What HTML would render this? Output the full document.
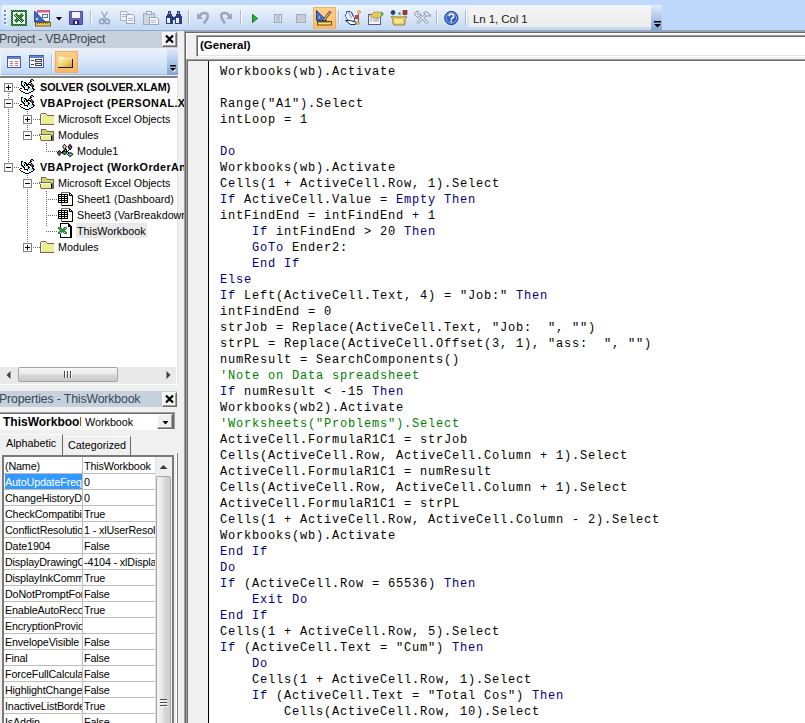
<!DOCTYPE html>
<html><head><meta charset="utf-8"><style>
*{margin:0;padding:0;box-sizing:border-box}
html,body{width:805px;height:723px;overflow:hidden;background:#F0F0F0;font-family:"Liberation Sans",sans-serif;position:relative}
.a{position:absolute}
svg{position:absolute;overflow:visible}
#tb{left:0;top:0;width:805px;height:31px;background:#BED9FB;border-bottom:1px solid #8CA6C8}
#tbstrip{left:1px;top:5px;width:661px;height:26px;border-radius:3px 3px 0 0;background:linear-gradient(#EEF4FC,#D9E6F8 50%,#C2D8F5);border-bottom:1px solid #8FA9CC}
.ttl{background:#C7D1DD;color:#3C4656;font-size:12.3px;line-height:16px;text-indent:-1px;letter-spacing:-0.3px;white-space:nowrap;overflow:hidden}
.xbtn{width:15px;height:15px;background:#F4F4F4;border:1px solid #fff;border-right-color:#696969;border-bottom-color:#696969;box-shadow:inset -1px -1px 0 #A0A0A0}
#ptb{left:0;top:48px;width:178px;height:28px;background:linear-gradient(#E3ECF8,#CCDDF3);border-bottom:1px solid #A9C2E3}
#tree{left:0;top:76px;width:178px;height:309px;background:#fff;border-top:2px solid #808080;border-right:1px solid #E0E0E0;border-bottom:1px solid #fff;overflow:hidden}
.exp{width:9px;height:9px;border:1px solid #808080;background:#fff}
.exp .hb{position:absolute;left:1px;top:3px;width:5px;height:1px;background:#000}
.exp .vb{position:absolute;left:3px;top:1px;width:1px;height:5px;background:#000}
.vd{width:1px;background:repeating-linear-gradient(#6A6A6A 0 1px,transparent 1px 2px)}
.hd{height:1px;background:repeating-linear-gradient(90deg,#6A6A6A 0 1px,transparent 1px 2px)}
.tt{font-size:10.75px;line-height:16px;height:16px;white-space:nowrap;color:#000}
.g{letter-spacing:-0.15px}
.b{font-weight:bold}
#code{left:184px;top:31px;width:621px;height:692px;background:#F0F0F0;border-left:1px solid #A0A0A0;border-top:1px solid #A0A0A0}
#code2{left:185px;top:32px;width:620px;height:691px;border-left:1px solid #696969;border-top:1px solid #696969}
#code3{left:186px;top:33px;width:619px;height:690px;border-left:1px solid #fff;border-top:1px solid #fff}
#gen{left:196px;top:35px;width:620px;height:22px;background:#fff;border-left:1px solid #A0A0A0;border-top:1px solid #A0A0A0;border-bottom:1px solid #fff;box-shadow:inset 0 -1px 0 #E3E3E3}
#gen2{left:197px;top:36px;width:620px;height:20px;border-left:1px solid #696969;border-top:1px solid #696969;font-size:11.5px;font-weight:bold;line-height:17px;padding-left:2px}
#codearea{left:186px;top:59px;width:620px;height:664px;background:#fff;border-top:1px solid #A0A0A0;border-left:1px solid #A0A0A0}
#codearea2{left:187px;top:60px;width:620px;height:664px;border-top:1px solid #696969;border-left:1px solid #696969}
#margin{left:188px;top:61px;width:21px;height:662px;background:#F0F0F0;border-right:1px solid #000}
pre{font-family:"Liberation Mono",monospace;font-size:12px;letter-spacing:0.8px;line-height:16px;color:#000}
.k{color:#000080}.c{color:#008000}
</style></head><body>
<div id="tb" class="a"></div><div id="tbstrip" class="a"></div>
<svg class="a" style="left:4px;top:10px" width="4" height="16" viewBox="0 0 4 16" shape-rendering="crispEdges"><path d="M1 1h2v2H1zM1 5h2v2H1zM1 9h2v2H1zM1 13h2v2H1z" fill="#FFF"/><path d="M0 0h2v2H0zM0 4h2v2H0zM0 8h2v2H0zM0 12h2v2H0z" fill="#7B8FB8"/></svg>
<svg class="a" style="left:11px;top:10px" width="16" height="16" viewBox="0 0 16 16" shape-rendering="crispEdges"><defs><pattern id="dg" width="2" height="2" patternUnits="userSpaceOnUse"><rect width="2" height="2" fill="#4E9E56"/><rect width="1" height="1" fill="#13561F"/><rect x="1" y="1" width="1" height="1" fill="#13561F"/></pattern></defs><rect x="0" y="0" width="16" height="16" fill="url(#dg)"/><rect x="2" y="2" width="12" height="12" fill="#F2FBF2"/><path d="M4.2 4.2L11.8 11.8M11.8 4.2L4.2 11.8" stroke="url(#dg)" stroke-width="3.6"/><path d="M4.5 4.5L12 12" stroke="#C8F0C8" stroke-width="0.9"/></svg>
<svg class="a" style="left:34px;top:10px" width="17" height="17" viewBox="0 0 17 17"><rect x="3.5" y="0.5" width="12" height="11" fill="#F4F6FA" stroke="#5A6E9A"/><rect x="3" y="0" width="13" height="2.5" fill="#D8607A"/><rect x="8.5" y="4.5" width="5" height="3" fill="#fff" stroke="#5A6E9A"/><path d="M0.5 1v11h11z" fill="#3A66D0" stroke="#22408C" stroke-width="0.8"/><circle cx="3" cy="9" r="1" fill="#fff"/><rect x="1.5" y="12.5" width="15" height="3.5" fill="#EEC860" stroke="#7A5A18" stroke-width="1"/><path d="M3.5 13v1M5.5 13v1M7.5 13v1M9.5 13v1M11.5 13v1M13.5 13v1" stroke="#7A5A18" stroke-width="0.8"/></svg>
<svg class="a" style="left:56px;top:17px" width="6" height="4" viewBox="0 0 6 4"><path d="M0 0h6L3 3.5z" fill="#000"/></svg>
<svg class="a" style="left:69px;top:11px" width="14" height="14" viewBox="0 0 14 14"><rect x="0" y="0" width="14" height="14" rx="1" fill="#4B4BA8"/><rect x="1" y="1" width="12" height="12" fill="#6464C0"/><rect x="3" y="1" width="8" height="6" fill="#F4F4FF"/><rect x="4" y="9" width="6" height="5" fill="#2A2A70"/><rect x="6" y="10" width="2" height="3" fill="#fff"/></svg>
<div class="a" style="left:90px;top:10px;width:2px;height:15px;border-left:1px solid #A7BBD8;border-right:1px solid #fff"></div>
<svg class="a" style="left:99px;top:11px" width="11" height="14" viewBox="0 0 11 14"><path d="M2.5 0.5L7 8.5M8.5 0.5L4 8.5" stroke="#A0ACC0" stroke-width="1.5"/><circle cx="2.8" cy="10.5" r="2.2" fill="none" stroke="#8E9CB6" stroke-width="1.4"/><circle cx="8.2" cy="10.5" r="2.2" fill="none" stroke="#8E9CB6" stroke-width="1.4"/></svg>
<svg class="a" style="left:120px;top:11px" width="15" height="13" viewBox="0 0 15 13" shape-rendering="crispEdges"><path d="M0.5 0.5h6l2 2v7h-8z" fill="#EEF1F6" stroke="#A9B3C4"/><path d="M6.5 3.5h6l2 2v7h-8z" fill="#F4F6FA" stroke="#99A4B8"/><path d="M2 3h4M2 5h4M8 7h5M8 9h5" stroke="#B0B8C8"/></svg>
<svg class="a" style="left:143px;top:11px" width="16" height="14" viewBox="0 0 16 14" shape-rendering="crispEdges"><path d="M0.5 2.5h11v11h-11z" fill="#D0D6E0" stroke="#A0AABB"/><rect x="3.5" y="0.5" width="5" height="3" fill="#E8ECF2" stroke="#A0AABB"/><path d="M6.5 6.5h7l2 2v5h-9z" fill="#F4F6FA" stroke="#99A4B8"/><path d="M8 9h5M8 11h5" stroke="#B0B8C8"/></svg>
<svg class="a" style="left:166px;top:11px" width="16" height="13" viewBox="0 0 16 13" shape-rendering="crispEdges"><path d="M2 0h3v3h1v2h1v8H0V5h1V3h1z" fill="#2C3E80"/><path d="M11 0h3v3h1v2h1v8H9V5h1V3h1z" fill="#2C3E80"/><rect x="1" y="7" width="3" height="5" fill="#F0F2F8"/><rect x="10" y="7" width="3" height="5" fill="#F0F2F8"/><rect x="7" y="6" width="2" height="3" fill="#2C3E80"/><rect x="3" y="1" width="1" height="2" fill="#9AAAD8"/><rect x="12" y="1" width="1" height="2" fill="#9AAAD8"/></svg>
<div class="a" style="left:188px;top:10px;width:2px;height:15px;border-left:1px solid #A7BBD8;border-right:1px solid #fff"></div>
<svg class="a" style="left:197px;top:11px" width="13" height="13" viewBox="0 0 13 13"><path d="M2.5 5.5C4 1.5 10.5 0.5 10.8 4.5 11 8 8.5 10 7 12.5" fill="none" stroke="#9CA6B8" stroke-width="2.6"/><path d="M0 2v6h6z" fill="#9CA6B8"/></svg>
<svg class="a" style="left:219px;top:11px" width="13" height="13" viewBox="0 0 13 13"><path d="M10.5 5.5C9 1.5 2.5 0.5 2.2 4.5 2 8 4.5 10 6 12.5" fill="none" stroke="#9CA6B8" stroke-width="2.6"/><path d="M13 2v6H7z" fill="#9CA6B8"/></svg>
<div class="a" style="left:240px;top:10px;width:2px;height:15px;border-left:1px solid #A7BBD8;border-right:1px solid #fff"></div>
<svg class="a" style="left:252px;top:14px" width="6" height="9" viewBox="0 0 6 9"><path d="M0.5 0.5v8l5-4z" fill="#2AB02A" stroke="#137A13" stroke-width="1"/></svg>
<svg class="a" style="left:274px;top:14px" width="8" height="9" viewBox="0 0 8 9"><rect x="0.5" y="0.5" width="2.5" height="8" fill="#E4E8EE" stroke="#9AA3B3"/><rect x="5" y="0.5" width="2.5" height="8" fill="#E4E8EE" stroke="#9AA3B3"/></svg>
<svg class="a" style="left:296px;top:14px" width="10" height="9" viewBox="0 0 10 9"><rect x="0.5" y="0.5" width="9" height="8" fill="#C8CED8" stroke="#A3ACBC"/></svg>
<div class="a" style="left:313px;top:7px;width:23px;height:22px;background:linear-gradient(#FCD08E,#F9BC6C);border:1px solid #F0B060"></div>
<svg class="a" style="left:316px;top:10px" width="17" height="16" viewBox="0 0 17 16"><path d="M0.5 0.5v10h10z" fill="#4A72D8" stroke="#22408C" stroke-width="1"/><path d="M2.5 5v3.5h3.5z" fill="#2850B0"/><circle cx="3.4" cy="7.2" r="0.8" fill="#fff"/><path d="M8 10L14.5 1.5" stroke="#3A2A10" stroke-width="2.6"/><path d="M8 10L14.5 1.5" stroke="#F0DC90" stroke-width="1.2"/><path d="M13.5 0.5l2 1.5-1 1.4-2-1.5z" fill="#C07050"/><rect x="1.5" y="11.5" width="14" height="3.5" fill="#F6DA80" stroke="#6A4A10" stroke-width="1"/><path d="M3 12v1M5 12v1M7 12v1M9 12v1M11 12v1M13 12v1" stroke="#6A4A10" stroke-width="0.8"/></svg>
<div class="a" style="left:338px;top:10px;width:2px;height:15px;border-left:1px solid #A7BBD8;border-right:1px solid #fff"></div>
<svg class="a" style="left:345px;top:10px" width="17" height="16" viewBox="0 0 17 16"><path d="M1.5 1.5h4l2 2h-1l2 2h-1l2 2v3l-2 1h-3l-3-3v-1l-1-1v-2l1-1z" fill="#EAF2FF" stroke="#2C50A8" stroke-width="1"/><path d="M3 3h2M4 5h2M5 7h2" stroke="#6C90D8" stroke-width="1"/><path d="M0.5 10.5l5 4h5l1-2-6-2z" fill="#fff" stroke="#1E2A50" stroke-width="1"/><path d="M13.5 4v9" stroke="#3A60C0"/><path d="M14 0l2 2-2 2-2-2z" fill="#E8C848" stroke="#A08020" stroke-width="0.5"/><path d="M10 5h4v4h-4z" fill="#D04030"/><path d="M13 11l2 2-2 2-2-2z" fill="#E8C848" stroke="#A08020" stroke-width="0.5"/></svg>
<svg class="a" style="left:368px;top:11px" width="17" height="15" viewBox="0 0 17 15"><rect x="0.5" y="3.5" width="12" height="10" fill="#F8FAFE" stroke="#4A5E88"/><path d="M2 8h2M5 8h6M2 10h2M5 10h6" stroke="#8A98B8"/><path d="M2 5l4-4h5l3 1v3l-3 2h-3l-2-1-2 1z" fill="#E6C860" stroke="#9A8030" stroke-width="0.6"/><path d="M13 0l3 3-3 3z" fill="#50A850"/></svg>
<svg class="a" style="left:390px;top:10px" width="18" height="16" viewBox="0 0 18 16"><circle cx="3" cy="2.5" r="2" fill="#2A3890" stroke="#101850" stroke-width="0.6"/><path d="M10.5 1.5v4l-3-2z" fill="#40A050"/><rect x="13" y="0.5" width="4" height="4" fill="#B83030" stroke="#601818" stroke-width="0.6"/><path d="M1 7l2-1 2 1h8l2-1 2 1-2 2v5l-1 1H4l-1-1V9z" fill="#E8D060" stroke="#7A6420" stroke-width="0.8"/><path d="M4 9h9v4H4z" fill="#F4E48A"/></svg>
<svg class="a" style="left:414px;top:11px" width="17" height="14" viewBox="0 0 17 14"><path d="M3 12.5l9-9M5 3.5l9 9" stroke="#8E96A6" stroke-width="2.6"/><path d="M3 12.5l9-9M5 3.5l9 9" stroke="#E4E8EE" stroke-width="1.2"/><path d="M0.5 3.5a3 3 0 0 1 4-3l-1 2 1 1 2-1a3 3 0 0 1-3 4z" fill="#DDE2EA" stroke="#8E96A6" stroke-width="1"/><path d="M9.5 1.5l3-1 4 3v2l-2-1-2 1z" fill="#DDE2EA" stroke="#8E96A6" stroke-width="1"/></svg>
<div class="a" style="left:436px;top:10px;width:2px;height:15px;border-left:1px solid #A7BBD8;border-right:1px solid #fff"></div>
<svg class="a" style="left:444px;top:11px" width="15" height="14" viewBox="0 0 15 14"><circle cx="7.3" cy="7" r="6.6" fill="#2F5FC8" stroke="#1A3A90" stroke-width="1"/><circle cx="7.3" cy="7" r="5.3" fill="none" stroke="#fff" stroke-width="0.8" opacity="0.6"/><path d="M5 5.2a2.3 2.2 0 1 1 3 2.1c-0.7 0.3-0.8 0.6-0.8 1.4" fill="none" stroke="#fff" stroke-width="1.6"/><rect x="6.4" y="9.6" width="1.7" height="1.7" fill="#fff"/></svg>
<div class="a" style="left:465px;top:10px;width:2px;height:15px;border-left:1px solid #A7BBD8;border-right:1px solid #fff"></div>
<div class="a" style="left:469px;top:6px;width:182px;height:21px;background:linear-gradient(#F4F4F4,#EDEDED);border-top:1px solid #F8FAFD"></div>
<div class="a" style="left:473px;top:11px;font-size:11.5px;line-height:16px;color:#1A1A1A;white-space:nowrap;letter-spacing:-0.1px">Ln 1, Col 1</div>
<div class="a" style="left:651px;top:5px;width:11px;height:26px;border-radius:0 3px 0 0;background:linear-gradient(#E2ECF9,#A9C4EA 55%,#7FA3D6)"></div>
<svg class="a" style="left:654px;top:21px" width="7" height="7" viewBox="0 0 7 7"><rect x="0" y="0" width="7" height="1.5" fill="#000"/><path d="M0 3h7L3.5 6.5z" fill="#000"/></svg>
<div class="a ttl" style="left:0;top:31px;width:178px;height:17px">Project - VBAProject</div>
<div class="a xbtn" style="left:162px;top:32px"></div><svg class="a" style="left:165px;top:35px" width="9" height="8" viewBox="0 0 9 8"><path d="M1 0.5l7 7M8 0.5l-7 7" stroke="#000" stroke-width="2.2"/></svg>
<div class="a" style="left:0;top:48px;width:178px;height:28px;background:#F0F0F0"></div>
<div class="a" style="left:1px;top:49px;width:177px;height:26px;border-radius:3px 3px 0 0;background:linear-gradient(#EAF1FC,#D8E6F9 50%,#BFD6F5);border-bottom:1px solid #A3BDE2"></div>
<svg class="a" style="left:7px;top:56px" width="15" height="12" viewBox="0 0 15 12" shape-rendering="crispEdges"><rect x="0.5" y="0.5" width="13" height="11" fill="#F6F8FC" stroke="#3F5EA8"/><rect x="0.5" y="0.5" width="13" height="2" fill="#5F86D0"/><path d="M3 5h3M8 5h3M3 7h3M8 7h3M3 9h3M8 9h3" stroke="#D07070"/></svg>
<svg class="a" style="left:29px;top:55px" width="15" height="13" viewBox="0 0 15 13" shape-rendering="crispEdges"><rect x="0.5" y="0.5" width="14" height="12" fill="#F6F8FC" stroke="#3F5EA8"/><rect x="0.5" y="0.5" width="14" height="2" fill="#5F86D0"/><path d="M2 5h3M2 9h3" stroke="#404040"/><rect x="6.5" y="4.5" width="6" height="2" fill="#fff" stroke="#404040"/><rect x="6.5" y="8.5" width="6" height="2" fill="#fff" stroke="#404040"/></svg>
<div class="a" style="left:51px;top:55px;width:2px;height:15px;border-left:1px solid #A7BBD8;border-right:1px solid #fff"></div>
<div class="a" style="left:55px;top:51px;width:23px;height:22px;background:linear-gradient(#FCCE8A,#F9B866);border:1px solid #EDB060"></div>
<svg class="a" style="left:58px;top:56px" width="16" height="12" viewBox="0 0 16 12"><defs><linearGradient id="fg" x1="0" y1="0" x2="1" y2="1"><stop offset="0" stop-color="#FFF2B8"/><stop offset="0.6" stop-color="#EBC860"/><stop offset="1" stop-color="#C89828"/></linearGradient></defs><path d="M0.5 0.5h5l1 1.5h7.5v9H0.5z" fill="#FFF4C8" stroke="#E8D8A0" stroke-width="0.6"/><rect x="0.5" y="3" width="14" height="8.5" fill="url(#fg)"/><path d="M0.5 3v8.5h14V3" fill="none" stroke="#3A2A08" stroke-width="1" stroke-dasharray="0 8.5 22.5"/><path d="M0 11.5h15M14.5 3v9" stroke="#2A1A04" stroke-width="1"/></svg>
<div class="a" style="left:167px;top:49px;width:11px;height:26px;border-radius:0 3px 0 0;background:linear-gradient(#DDE8F8,#A9C4EA 55%,#7FA3D6)"></div>
<svg class="a" style="left:170px;top:65px" width="7" height="8" viewBox="0 0 7 8"><rect x="0" y="0" width="6" height="1.5" fill="#000"/><path d="M0.5 3.5h5L3 6.5z" fill="#fff" transform="translate(0.8,0.8)"/><path d="M0 3h6L3 6z" fill="#000"/></svg>
<div id="tree" class="a"></div>
<div class="a vd" style="left:8px;top:93px;height:70px"></div>
<div class="a vd" style="left:27px;top:111px;height:20px"></div>
<div class="a vd" style="left:46px;top:143px;height:8px"></div>
<div class="a vd" style="left:27px;top:175px;height:68px"></div>
<div class="a vd" style="left:46px;top:191px;height:36px"></div>
<div class="a hd" style="left:14px;top:87px;width:5px"></div>
<div class="a exp" style="left:4px;top:83px"><div class="hb"></div><div class="vb"></div></div>
<svg class="a" style="left:19px;top:79px" width="16" height="15" viewBox="0 0 16 15" shape-rendering="crispEdges"><path d="M12 0h2v1h-2zM11 1h1v1h-1zM14 1h1v1h-1zM2 2h2v1h-2zM11 2h2v1h-2zM2 3h1v1h-1zM5 3h2v1h-2zM10 3h2v1h-2zM2 4h1v1h-1zM6 4h2v1h-2zM9 4h1v1h-1zM12 4h1v1h-1zM2 5h1v1h-1zM5 5h1v1h-1zM7 5h5v1h-5zM13 5h1v1h-1zM2 6h2v1h-2zM5 6h1v1h-1zM7 6h2v1h-2zM11 6h1v1h-1zM14 6h1v1h-1zM3 7h2v1h-2zM9 7h1v1h-1zM13 7h2v1h-2zM4 8h2v1h-2zM9 8h2v1h-2zM13 8h1v1h-1zM1 9h2v1h-2zM5 9h1v1h-1zM9 9h1v1h-1zM13 9h2v1h-2zM0 10h1v1h-1zM5 10h4v1h-4zM14 10h2v1h-2zM1 11h1v1h-1zM8 11h1v1h-1zM14 11h1v1h-1zM2 12h2v1h-2zM12 12h2v1h-2zM4 13h2v1h-2zM10 13h2v1h-2zM6 14h4v1h-4z" fill="#000"/><path d="M12 1h2v1h-2z" fill="#78C878"/><path d="M3 3h2v1h-2zM4 4h2v1h-2zM6 5h1v1h-1zM6 6h1v1h-1zM6 7h3v1h-3zM8 8h1v1h-1zM8 9h1v1h-1zM10 9h3v1h-3zM10 10h4v1h-4zM11 11h3v1h-3z" fill="#A8EEF6"/><path d="M3 4h1v1h-1zM3 5h2v1h-2zM4 6h1v1h-1zM9 6h2v1h-2zM5 7h1v1h-1zM6 8h2v1h-2zM6 9h2v1h-2zM1 10h4v1h-4zM9 10h1v1h-1zM2 11h6v1h-6zM9 11h2v1h-2zM4 12h8v1h-8zM6 13h4v1h-4z" fill="#fff"/><path d="M10 4h2v1h-2z" fill="#F0EC98"/><path d="M12 5h1v1h-1zM12 6h2v1h-2zM12 7h1v1h-1z" fill="#8A4A9A"/></svg>
<div class="a tt b" style="left:40px;top:79px;">SOLVER (SOLVER.XLAM)</div>
<div class="a hd" style="left:14px;top:103px;width:5px"></div>
<div class="a exp" style="left:4px;top:99px"><div class="hb"></div></div>
<svg class="a" style="left:19px;top:95px" width="16" height="15" viewBox="0 0 16 15" shape-rendering="crispEdges"><path d="M12 0h2v1h-2zM11 1h1v1h-1zM14 1h1v1h-1zM2 2h2v1h-2zM11 2h2v1h-2zM2 3h1v1h-1zM5 3h2v1h-2zM10 3h2v1h-2zM2 4h1v1h-1zM6 4h2v1h-2zM9 4h1v1h-1zM12 4h1v1h-1zM2 5h1v1h-1zM5 5h1v1h-1zM7 5h5v1h-5zM13 5h1v1h-1zM2 6h2v1h-2zM5 6h1v1h-1zM7 6h2v1h-2zM11 6h1v1h-1zM14 6h1v1h-1zM3 7h2v1h-2zM9 7h1v1h-1zM13 7h2v1h-2zM4 8h2v1h-2zM9 8h2v1h-2zM13 8h1v1h-1zM1 9h2v1h-2zM5 9h1v1h-1zM9 9h1v1h-1zM13 9h2v1h-2zM0 10h1v1h-1zM5 10h4v1h-4zM14 10h2v1h-2zM1 11h1v1h-1zM8 11h1v1h-1zM14 11h1v1h-1zM2 12h2v1h-2zM12 12h2v1h-2zM4 13h2v1h-2zM10 13h2v1h-2zM6 14h4v1h-4z" fill="#000"/><path d="M12 1h2v1h-2z" fill="#78C878"/><path d="M3 3h2v1h-2zM4 4h2v1h-2zM6 5h1v1h-1zM6 6h1v1h-1zM6 7h3v1h-3zM8 8h1v1h-1zM8 9h1v1h-1zM10 9h3v1h-3zM10 10h4v1h-4zM11 11h3v1h-3z" fill="#A8EEF6"/><path d="M3 4h1v1h-1zM3 5h2v1h-2zM4 6h1v1h-1zM9 6h2v1h-2zM5 7h1v1h-1zM6 8h2v1h-2zM6 9h2v1h-2zM1 10h4v1h-4zM9 10h1v1h-1zM2 11h6v1h-6zM9 11h2v1h-2zM4 12h8v1h-8zM6 13h4v1h-4z" fill="#fff"/><path d="M10 4h2v1h-2z" fill="#F0EC98"/><path d="M12 5h1v1h-1zM12 6h2v1h-2zM12 7h1v1h-1z" fill="#8A4A9A"/></svg>
<div class="a tt b" style="left:40px;top:95px;letter-spacing:0.45px;">VBAProject (PERSONAL.XLSB)</div>
<div class="a hd" style="left:33px;top:119px;width:7px"></div>
<div class="a exp" style="left:23px;top:115px"><div class="hb"></div><div class="vb"></div></div>
<svg class="a" style="left:40px;top:111px" width="16" height="16" viewBox="0 0 16 16" shape-rendering="crispEdges">
<path d="M1 2h5v1h1v1h7v10H0V3h1z" fill="#6E6C50"/>
<path d="M1 3h5v1h1v1h7v8H1z" fill="#EEEC90"/>
<path d="M1 3h5v1H1zM1 5h1v8H1z" fill="#FCFCD0"/>
</svg>
<div class="a tt" style="left:58px;top:111px;">Microsoft Excel Objects</div>
<div class="a hd" style="left:33px;top:135px;width:6px"></div>
<div class="a exp" style="left:23px;top:131px"><div class="hb"></div></div>
<svg class="a" style="left:39px;top:127px" width="16" height="16" viewBox="0 0 16 16" shape-rendering="crispEdges">
<path d="M2 2h5v1h1v1h7v10H2z" fill="#6E6C50"/>
<path d="M3 3h4v1h1v1h6v3H3z" fill="#D8D468"/>
<path d="M0 7h12v1h1v1h1v4h1v1H2v-1H1V9H0z" fill="#6E6C50"/>
<path d="M1 8h11v1h1v4H2V9H1z" fill="#EEEC90"/>
<path d="M1 8h10v1H1z" fill="#fff"/>
<path d="M12 9h1v4h-1z" fill="#000"/>
</svg>
<div class="a tt" style="left:58px;top:127px;">Modules</div>
<div class="a hd" style="left:46px;top:151px;width:11px"></div>
<svg class="a" style="left:57px;top:144px" width="17" height="16" viewBox="0 0 17 16">
<path d="M4 8.5L8.5 5.5M8 4.5L13 10M12.5 5.5L8.5 9" stroke="#000" stroke-width="1" shape-rendering="crispEdges"/>
<path d="M7.5 0.3L9.3 2.8 7.5 5.5 5.7 2.8z" fill="#F4ECB0" stroke="#000" stroke-width="1"/>
<path d="M13 0.3L15 3 13 6 11 3z" fill="#9A3CB0" stroke="#000" stroke-width="1"/>
<path d="M2.3 6.3L4.3 8.8 2.3 11.5 0.3 8.8z" fill="#9A3CB0" stroke="#000" stroke-width="1"/>
<path d="M5 8.8L7 7.3h1.5L10 8.8 8.5 10.3H7z" fill="#3AA050" stroke="#000" stroke-width="1"/>
<path d="M10.5 10.3L12.5 8.8h1.5L16 10.3 14 12.3h-1.5z" fill="#5CC0D8" stroke="#000" stroke-width="1"/>
</svg>
<div class="a tt" style="left:77px;top:143px;">Module1</div>
<div class="a hd" style="left:14px;top:167px;width:5px"></div>
<div class="a exp" style="left:4px;top:163px"><div class="hb"></div></div>
<svg class="a" style="left:19px;top:159px" width="16" height="15" viewBox="0 0 16 15" shape-rendering="crispEdges"><path d="M12 0h2v1h-2zM11 1h1v1h-1zM14 1h1v1h-1zM2 2h2v1h-2zM11 2h2v1h-2zM2 3h1v1h-1zM5 3h2v1h-2zM10 3h2v1h-2zM2 4h1v1h-1zM6 4h2v1h-2zM9 4h1v1h-1zM12 4h1v1h-1zM2 5h1v1h-1zM5 5h1v1h-1zM7 5h5v1h-5zM13 5h1v1h-1zM2 6h2v1h-2zM5 6h1v1h-1zM7 6h2v1h-2zM11 6h1v1h-1zM14 6h1v1h-1zM3 7h2v1h-2zM9 7h1v1h-1zM13 7h2v1h-2zM4 8h2v1h-2zM9 8h2v1h-2zM13 8h1v1h-1zM1 9h2v1h-2zM5 9h1v1h-1zM9 9h1v1h-1zM13 9h2v1h-2zM0 10h1v1h-1zM5 10h4v1h-4zM14 10h2v1h-2zM1 11h1v1h-1zM8 11h1v1h-1zM14 11h1v1h-1zM2 12h2v1h-2zM12 12h2v1h-2zM4 13h2v1h-2zM10 13h2v1h-2zM6 14h4v1h-4z" fill="#000"/><path d="M12 1h2v1h-2z" fill="#78C878"/><path d="M3 3h2v1h-2zM4 4h2v1h-2zM6 5h1v1h-1zM6 6h1v1h-1zM6 7h3v1h-3zM8 8h1v1h-1zM8 9h1v1h-1zM10 9h3v1h-3zM10 10h4v1h-4zM11 11h3v1h-3z" fill="#A8EEF6"/><path d="M3 4h1v1h-1zM3 5h2v1h-2zM4 6h1v1h-1zM9 6h2v1h-2zM5 7h1v1h-1zM6 8h2v1h-2zM6 9h2v1h-2zM1 10h4v1h-4zM9 10h1v1h-1zM2 11h6v1h-6zM9 11h2v1h-2zM4 12h8v1h-8zM6 13h4v1h-4z" fill="#fff"/><path d="M10 4h2v1h-2z" fill="#F0EC98"/><path d="M12 5h1v1h-1zM12 6h2v1h-2zM12 7h1v1h-1z" fill="#8A4A9A"/></svg>
<div class="a tt b" style="left:40px;top:159px;letter-spacing:0.45px;">VBAProject (WorkOrderAnalysis.xlsm)</div>
<div class="a hd" style="left:33px;top:183px;width:6px"></div>
<div class="a exp" style="left:23px;top:179px"><div class="hb"></div></div>
<svg class="a" style="left:39px;top:175px" width="16" height="16" viewBox="0 0 16 16" shape-rendering="crispEdges">
<path d="M2 2h5v1h1v1h7v10H2z" fill="#6E6C50"/>
<path d="M3 3h4v1h1v1h6v3H3z" fill="#D8D468"/>
<path d="M0 7h12v1h1v1h1v4h1v1H2v-1H1V9H0z" fill="#6E6C50"/>
<path d="M1 8h11v1h1v4H2V9H1z" fill="#EEEC90"/>
<path d="M1 8h10v1H1z" fill="#fff"/>
<path d="M12 9h1v4h-1z" fill="#000"/>
</svg>
<div class="a tt" style="left:58px;top:175px;">Microsoft Excel Objects</div>
<div class="a hd" style="left:46px;top:199px;width:12px"></div>
<svg class="a" style="left:58px;top:191px" width="16" height="16" viewBox="0 0 16 16" shape-rendering="crispEdges">
<path d="M3 1h9v1h1v1h1v1h1v11H3z" fill="#000"/>
<path d="M3 1h9v1H4v13H3z" fill="#707070"/>
<path d="M4 2h8v1h1v1h1v10H4z" fill="#fff"/>
<path d="M11 2h1v2h2v1h-3z" fill="#000"/>
<path d="M0 3h10v9H0z" fill="#000"/>
<path d="M1 4h2v1H1zM4 4h2v1H4zM7 4h2v1H7zM1 6h2v1H1zM4 6h2v1H4zM7 6h2v1H7zM1 8h2v1H1zM4 8h2v1H4zM7 8h2v1H7zM1 10h2v1H1zM4 10h2v1H4zM7 10h2v1H7z" fill="#fff"/>
</svg>
<div class="a tt" style="left:77px;top:191px;">Sheet1 (Dashboard)</div>
<div class="a hd" style="left:46px;top:215px;width:12px"></div>
<svg class="a" style="left:58px;top:207px" width="16" height="16" viewBox="0 0 16 16" shape-rendering="crispEdges">
<path d="M3 1h9v1h1v1h1v1h1v11H3z" fill="#000"/>
<path d="M3 1h9v1H4v13H3z" fill="#707070"/>
<path d="M4 2h8v1h1v1h1v10H4z" fill="#fff"/>
<path d="M11 2h1v2h2v1h-3z" fill="#000"/>
<path d="M0 3h10v9H0z" fill="#000"/>
<path d="M1 4h2v1H1zM4 4h2v1H4zM7 4h2v1H7zM1 6h2v1H1zM4 6h2v1H4zM7 6h2v1H7zM1 8h2v1H1zM4 8h2v1H4zM7 8h2v1H7zM1 10h2v1H1zM4 10h2v1H4zM7 10h2v1H7z" fill="#fff"/>
</svg>
<div class="a tt" style="left:77px;top:207px;">Sheet3 (VarBreakdown)</div>
<div class="a hd" style="left:46px;top:231px;width:11px"></div>
<svg class="a" style="left:57px;top:223px" width="16" height="16" viewBox="0 0 16 16" shape-rendering="crispEdges">
<path d="M3 0h9v1h1v1h1v1h1v12H3z" fill="#000"/>
<path d="M4 1h7v1h1v1h1v11H4z" fill="#fff"/>
<path d="M11 1h1v2h2v1h-3z" fill="#000"/>
<path d="M1 4h3v1h1v1h1V5h1V4h3v2H9v1H8v1h1v1h1v2H7v-1H6V9H5v1H4v1H1V9h1V8h1V7H2V6H1z" fill="#2E8B3A"/>
<path d="M2 5h1v1h1v1h1v1h1v1h1v1h1v-1H7V9H6V8H5V7H4V6H3V5z" fill="#B8E8B8"/>
<path d="M8 5h1v1H8zM3 9h1v1H3z" fill="#B8E8B8"/>
</svg>
<div class="a" style="left:76px;top:223px;width:71px;height:15px;background:#EAEAEA"></div>
<div class="a tt" style="left:77px;top:223px;">ThisWorkbook</div>
<div class="a hd" style="left:33px;top:247px;width:7px"></div>
<div class="a exp" style="left:23px;top:243px"><div class="hb"></div><div class="vb"></div></div>
<svg class="a" style="left:40px;top:239px" width="16" height="16" viewBox="0 0 16 16" shape-rendering="crispEdges">
<path d="M1 2h5v1h1v1h7v10H0V3h1z" fill="#6E6C50"/>
<path d="M1 3h5v1h1v1h7v8H1z" fill="#EEEC90"/>
<path d="M1 3h5v1H1zM1 5h1v8H1z" fill="#FCFCD0"/>
</svg>
<div class="a tt" style="left:58px;top:239px;">Modules</div>
<div class="a" style="left:0;top:367px;width:176px;height:17px;background:#E9E9E9"></div>
<div class="a" style="left:18px;top:367px;width:100px;height:15px;border:1px solid #A3A3A3;border-radius:2px;background:linear-gradient(#F6F6F6,#EAEAEA 45%,#D6D6D6 55%,#CACACA)"></div>
<svg class="a" style="left:6px;top:371px" width="5" height="8"><path d="M4.5 0v8L0.5 4z" fill="#404040"/></svg>
<svg class="a" style="left:166px;top:371px" width="5" height="8"><path d="M0.5 0v8l4-4z" fill="#404040"/></svg>
<svg class="a" style="left:63px;top:370px" width="9" height="9" shape-rendering="crispEdges"><path d="M1 1h1v7H1zM4 1h1v7H4zM7 1h1v7H7z" fill="#4A4A4A"/><path d="M2 1h1v7H2zM5 1h1v7H5zM8 1h1v7H8z" fill="#F8F8F8"/></svg>
<div class="a ttl" style="left:0;top:391px;width:177px;height:16px;letter-spacing:-0.15px">Properties - ThisWorkbook</div>
<div class="a xbtn" style="left:162px;top:392px"></div><svg class="a" style="left:165px;top:395px" width="9" height="8" viewBox="0 0 9 8"><path d="M1 0.5l7 7M8 0.5l-7 7" stroke="#000" stroke-width="2.2"/></svg>
<div class="a" style="left:0;top:412px;width:175px;height:18px;background:#fff;border-top:1px solid #A0A0A0;border-right:1px solid #A0A0A0;border-bottom:1px solid #fff;box-shadow:inset 0 1px 0 #696969,inset -1px 0 0 #696969"></div>
<div class="a tt" style="left:3px;top:414px;width:78px;overflow:hidden;font-size:12px"><b>ThisWorkbook</b></div>
<div class="a tt" style="left:85px;top:414px">Workbook</div>
<div class="a" style="left:157px;top:414px;width:16px;height:15px;background:#F0F0F0;border:1px solid #fff;border-right-color:#696969;border-bottom-color:#696969;box-shadow:inset -1px -1px 0 #A0A0A0"></div>
<svg class="a" style="left:162px;top:421px" width="7" height="4"><path d="M0.5 0h6L3.5 3.5z" fill="#000"/></svg>
<div class="a" style="left:-2px;top:434px;width:65px;height:22px;background:#F0F0F0;border:1px solid #fff;border-right:1px solid #696969;border-bottom:none"></div>
<div class="a tt" style="left:6px;top:435px">Alphabetic</div>
<div class="a" style="left:63px;top:436px;width:68px;height:19px;background:#F0F0F0;border-top:1px solid #fff;border-right:1px solid #696969"></div>
<div class="a tt" style="left:68px;top:437px">Categorized</div>
<div class="a" style="left:0;top:453px;width:178px;height:270px;border-right:1px solid #808080;box-shadow:inset -1px 0 0 #fff"></div>
<div class="a" style="left:2px;top:455px;width:172px;height:280px;background:#fff;border:2px solid #7A7A7A;border-bottom:none"></div>
<div class="a tt g" style="left:5px;top:458px;width:77px;overflow:hidden">(Name)</div>
<div class="a tt g" style="left:84px;top:458px;width:71px;overflow:hidden">ThisWorkbook</div>
<div class="a" style="left:4px;top:473px;width:151px;height:1px;background:#BDBDBD"></div>
<div class="a" style="left:5px;top:474px;width:77px;height:15px;background:#3399FF"></div>
<div class="a tt g" style="left:5px;top:474px;width:77px;overflow:hidden;color:#fff">AutoUpdateFrequency</div>
<div class="a tt g" style="left:84px;top:474px;width:71px;overflow:hidden">0</div>
<div class="a" style="left:4px;top:489px;width:151px;height:1px;background:#BDBDBD"></div>
<div class="a tt g" style="left:5px;top:490px;width:77px;overflow:hidden">ChangeHistoryDuration</div>
<div class="a tt g" style="left:84px;top:490px;width:71px;overflow:hidden">0</div>
<div class="a" style="left:4px;top:505px;width:151px;height:1px;background:#BDBDBD"></div>
<div class="a tt g" style="left:5px;top:506px;width:77px;overflow:hidden">CheckCompatibility</div>
<div class="a tt g" style="left:84px;top:506px;width:71px;overflow:hidden">True</div>
<div class="a" style="left:4px;top:521px;width:151px;height:1px;background:#BDBDBD"></div>
<div class="a tt g" style="left:5px;top:522px;width:77px;overflow:hidden">ConflictResolution</div>
<div class="a tt g" style="left:84px;top:522px;width:71px;overflow:hidden">1 - xlUserResolution</div>
<div class="a" style="left:4px;top:537px;width:151px;height:1px;background:#BDBDBD"></div>
<div class="a tt g" style="left:5px;top:538px;width:77px;overflow:hidden">Date1904</div>
<div class="a tt g" style="left:84px;top:538px;width:71px;overflow:hidden">False</div>
<div class="a" style="left:4px;top:553px;width:151px;height:1px;background:#BDBDBD"></div>
<div class="a tt g" style="left:5px;top:554px;width:77px;overflow:hidden">DisplayDrawingObjects</div>
<div class="a tt g" style="left:84px;top:554px;width:71px;overflow:hidden">-4104 - xlDisplayShapes</div>
<div class="a" style="left:4px;top:569px;width:151px;height:1px;background:#BDBDBD"></div>
<div class="a tt g" style="left:5px;top:570px;width:77px;overflow:hidden">DisplayInkComments</div>
<div class="a tt g" style="left:84px;top:570px;width:71px;overflow:hidden">True</div>
<div class="a" style="left:4px;top:585px;width:151px;height:1px;background:#BDBDBD"></div>
<div class="a tt g" style="left:5px;top:586px;width:77px;overflow:hidden">DoNotPromptForConvert</div>
<div class="a tt g" style="left:84px;top:586px;width:71px;overflow:hidden">False</div>
<div class="a" style="left:4px;top:601px;width:151px;height:1px;background:#BDBDBD"></div>
<div class="a tt g" style="left:5px;top:602px;width:77px;overflow:hidden">EnableAutoRecover</div>
<div class="a tt g" style="left:84px;top:602px;width:71px;overflow:hidden">True</div>
<div class="a" style="left:4px;top:617px;width:151px;height:1px;background:#BDBDBD"></div>
<div class="a tt g" style="left:5px;top:618px;width:77px;overflow:hidden">EncryptionProvider</div>
<div class="a tt g" style="left:84px;top:618px;width:71px;overflow:hidden"></div>
<div class="a" style="left:4px;top:633px;width:151px;height:1px;background:#BDBDBD"></div>
<div class="a tt g" style="left:5px;top:634px;width:77px;overflow:hidden">EnvelopeVisible</div>
<div class="a tt g" style="left:84px;top:634px;width:71px;overflow:hidden">False</div>
<div class="a" style="left:4px;top:649px;width:151px;height:1px;background:#BDBDBD"></div>
<div class="a tt g" style="left:5px;top:650px;width:77px;overflow:hidden">Final</div>
<div class="a tt g" style="left:84px;top:650px;width:71px;overflow:hidden">False</div>
<div class="a" style="left:4px;top:665px;width:151px;height:1px;background:#BDBDBD"></div>
<div class="a tt g" style="left:5px;top:666px;width:77px;overflow:hidden">ForceFullCalculation</div>
<div class="a tt g" style="left:84px;top:666px;width:71px;overflow:hidden">False</div>
<div class="a" style="left:4px;top:681px;width:151px;height:1px;background:#BDBDBD"></div>
<div class="a tt g" style="left:5px;top:682px;width:77px;overflow:hidden">HighlightChangesOnScreen</div>
<div class="a tt g" style="left:84px;top:682px;width:71px;overflow:hidden">False</div>
<div class="a" style="left:4px;top:697px;width:151px;height:1px;background:#BDBDBD"></div>
<div class="a tt g" style="left:5px;top:698px;width:77px;overflow:hidden">InactiveListBorderVisible</div>
<div class="a tt g" style="left:84px;top:698px;width:71px;overflow:hidden">True</div>
<div class="a" style="left:4px;top:713px;width:151px;height:1px;background:#BDBDBD"></div>
<div class="a tt g" style="left:5px;top:714px;width:77px;overflow:hidden">IsAddin</div>
<div class="a tt g" style="left:84px;top:714px;width:71px;overflow:hidden">False</div>
<div class="a" style="left:4px;top:729px;width:151px;height:1px;background:#BDBDBD"></div>
<div class="a" style="left:82px;top:457px;width:1px;height:266px;background:#BDBDBD"></div>
<div class="a" style="left:155px;top:457px;width:17px;height:266px;background:#EFEFEF;border-left:1px solid #E0E0E0"></div>
<div class="a" style="left:156px;top:476px;width:15px;height:260px;border:1px solid #A8A8A8;border-radius:2px;background:linear-gradient(90deg,#F4F4F4,#E6E6E6 45%,#D8D8D8 55%,#CFCFCF)"></div>
<svg class="a" style="left:159px;top:464px" width="9" height="6"><path d="M0.5 5h8L4.5 1z" fill="#3A3A3A"/></svg>
<svg class="a" style="left:159px;top:698px" width="9" height="9" shape-rendering="crispEdges"><path d="M1 1h7v1H1zM1 4h7v1H1zM1 7h7v1H1z" fill="#4A4A4A"/><path d="M1 2h7v1H1zM1 5h7v1H1zM1 8h7v1H1z" fill="#F8F8F8"/></svg>
<div id="code" class="a"></div><div id="code2" class="a"></div><div id="code3" class="a"></div><div id="gen" class="a"></div><div id="gen2" class="a">(General)</div><div id="codearea" class="a"></div><div id="codearea2" class="a"></div><div id="margin" class="a"></div>
<pre class="a" style="left:220px;top:64px">Workbooks(wb).Activate

Range("A1").Select
intLoop = 1

<span class="k">Do</span>
Workbooks(wb).Activate
Cells(1 + ActiveCell.Row, 1).Select
<span class="k">If</span> ActiveCell.Value = <span class="k">Empty</span> <span class="k">Then</span>
intFindEnd = intFindEnd + 1
    <span class="k">If</span> intFindEnd &gt; 20 <span class="k">Then</span>
    <span class="k">GoTo</span> Ender2:
    <span class="k">End If</span>
<span class="k">Else</span>
<span class="k">If</span> Left(ActiveCell.Text, 4) = "Job:" <span class="k">Then</span>
intFindEnd = 0
strJob = Replace(ActiveCell.Text, "Job:  ", "")
strPL = Replace(ActiveCell.Offset(3, 1), "ass:  ", "")
numResult = SearchComponents()
<span class="c">'Note on Data spreadsheet</span>
<span class="k">If</span> numResult &lt; -15 <span class="k">Then</span>
Workbooks(wb2).Activate
<span class="c">'Worksheets("Problems").Select</span>
ActiveCell.FormulaR1C1 = strJob
Cells(ActiveCell.Row, ActiveCell.Column + 1).Select
ActiveCell.FormulaR1C1 = numResult
Cells(ActiveCell.Row, ActiveCell.Column + 1).Select
ActiveCell.FormulaR1C1 = strPL
Cells(1 + ActiveCell.Row, ActiveCell.Column - 2).Select
Workbooks(wb).Activate
<span class="k">End If</span>
<span class="k">Do</span>
<span class="k">If</span> (ActiveCell.Row = 65536) <span class="k">Then</span>
    <span class="k">Exit Do</span>
<span class="k">End If</span>
Cells(1 + ActiveCell.Row, 5).Select
<span class="k">If</span> (ActiveCell.Text = "Cum") <span class="k">Then</span>
    <span class="k">Do</span>
    Cells(1 + ActiveCell.Row, 1).Select
    <span class="k">If</span> (ActiveCell.Text = "Total Cos") <span class="k">Then</span>
        Cells(ActiveCell.Row, 10).Select
</pre>
</body></html>
